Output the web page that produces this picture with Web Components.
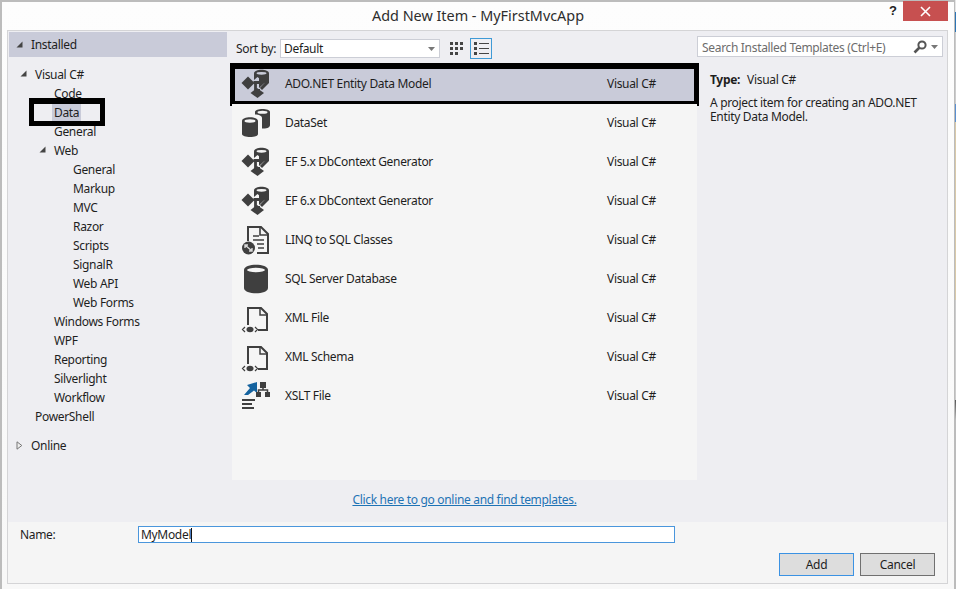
<!DOCTYPE html>
<html><head><meta charset="utf-8"><title>Add New Item</title>
<style>
html,body{margin:0;padding:0;background:#fafafa}
body{font:12px/16px "Noto Sans","Open Sans","Liberation Sans",sans-serif;color:#1e1e1e;letter-spacing:-.32px}
</style></head><body>
<vs-dialog heading="Add New Item - MyFirstMvcApp">
  <vs-tree slot="tree">
    <vs-tree-group label="Installed" open></vs-tree-group>
    <vs-tree-item level="1" arrow="open">Visual C#</vs-tree-item>
    <vs-tree-item level="2">Code</vs-tree-item>
    <vs-tree-item level="2" selected marked>Data</vs-tree-item>
    <vs-tree-item level="2">General</vs-tree-item>
    <vs-tree-item level="2" arrow="open">Web</vs-tree-item>
    <vs-tree-item level="3">General</vs-tree-item>
    <vs-tree-item level="3">Markup</vs-tree-item>
    <vs-tree-item level="3">MVC</vs-tree-item>
    <vs-tree-item level="3">Razor</vs-tree-item>
    <vs-tree-item level="3">Scripts</vs-tree-item>
    <vs-tree-item level="3">SignalR</vs-tree-item>
    <vs-tree-item level="3">Web API</vs-tree-item>
    <vs-tree-item level="3">Web Forms</vs-tree-item>
    <vs-tree-item level="2">Windows Forms</vs-tree-item>
    <vs-tree-item level="2">WPF</vs-tree-item>
    <vs-tree-item level="2">Reporting</vs-tree-item>
    <vs-tree-item level="2">Silverlight</vs-tree-item>
    <vs-tree-item level="2">Workflow</vs-tree-item>
    <vs-tree-item level="1">PowerShell</vs-tree-item>
    <vs-tree-group label="Online"></vs-tree-group>
  </vs-tree>
  <vs-toolbar slot="toolbar"></vs-toolbar>
  <vs-search slot="search"></vs-search>
  <vs-list slot="list">
    <vs-row icon="edm" lang="Visual C#" selected>ADO.NET Entity Data Model</vs-row>
    <vs-row icon="dataset" lang="Visual C#">DataSet</vs-row>
    <vs-row icon="edm" lang="Visual C#">EF 5.x DbContext Generator</vs-row>
    <vs-row icon="edm" lang="Visual C#">EF 6.x DbContext Generator</vs-row>
    <vs-row icon="linq" lang="Visual C#">LINQ to SQL Classes</vs-row>
    <vs-row icon="sql" lang="Visual C#">SQL Server Database</vs-row>
    <vs-row icon="xml" lang="Visual C#">XML File</vs-row>
    <vs-row icon="xml" lang="Visual C#">XML Schema</vs-row>
    <vs-row icon="xslt" lang="Visual C#">XSLT File</vs-row>
  </vs-list>
  <vs-details slot="details" type="Visual C#">A project item for creating an ADO.NET Entity Data Model.</vs-details>
  <vs-online slot="online">Click here to go online and find templates.</vs-online>
  <vs-footer slot="footer"></vs-footer>
</vs-dialog>
<script>
function def(name, html){
  customElements.define(name, class extends HTMLElement{
    connectedCallback(){
      if(this.shadowRoot) return;
      const r=this.attachShadow({mode:'open'});
      r.innerHTML = typeof html==='function'?html(this):html;
    }
  });
}
const esc=s=>String(s||'').replace(/&/g,'&amp;').replace(/</g,'&lt;');
const OPEN='<svg width="7" height="7" viewBox="0 0 7 7"><path d="M6.5 .5V6.5H.5Z" fill="#444"/></svg>';
const CLOSED='<svg width="7" height="9" viewBox="0 0 7 9"><path d="M1 .8 5.8 4.5 1 8.2Z" fill="#eee" stroke="#777"/></svg>';

def('vs-dialog',h=>`<style>
:host{display:flex;width:956px;height:589px;box-sizing:border-box;overflow:hidden;background:#fafafa}
.win{flex:1;display:flex;flex-direction:column;border:solid #bcbcbc;border-width:2px 1px 0 2px;min-width:0;background:linear-gradient(#fdfdfd,#f8f8f8)}
.edge{width:1px;background:linear-gradient(#e6e6e6 0,#e6e6e6 12px,#2c74b4 12px,#2c74b4 32px,#ccc 32px,#ccc 104px,#5a8fd0 104px,#5a8fd0 122px,#d9c9a8 122px,#d9c9a8 300px,#ccc 300px,#ccc 400px,#555 400px,#bbb 420px,#bbb 589px)}
header{height:28px;position:relative;display:flex;justify-content:center;align-items:center;font-size:14.4px;letter-spacing:0;color:#2d2d2d}
.help{position:absolute;right:57px;top:0;font:bold 13px/18px "Liberation Sans",sans-serif;color:#222}
.close{position:absolute;left:901px;top:-1px;width:45px;height:20px;background:#c75050;display:flex;align-items:center;justify-content:center}
.panel{flex:1;margin:0 6px 5px 5px;border:1px solid #d4d4d6;display:flex;flex-direction:column;min-height:0}
.body{height:491px;background:#eeeef2;display:grid;grid-template-columns:224px 465px 1fr;grid-template-rows:34px 415px 1fr}
.tree{grid-row:1/4;min-height:0}
.tb{grid-column:2}.srch{grid-column:3}.list{grid-column:2}.det{grid-column:3;grid-row:2/4}.on{grid-column:2}
.foot{flex:1;background:#f5f5f5}
</style>
<div class="win"><header><span class="t">${esc(h.getAttribute('heading'))}</span><span class="help">?</span>
<span class="close"><svg width="11" height="11" viewBox="0 0 11 11"><path d="M1 1 10 10M10 1 1 10" stroke="#fff" stroke-width="1.6"/></svg></span></header>
<div class="panel"><div class="body">
<div class="tree"><slot name="tree"></slot></div>
<div class="tb"><slot name="toolbar"></slot></div>
<div class="srch"><slot name="search"></slot></div>
<div class="list"><slot name="list"></slot></div>
<div class="det"><slot name="details"></slot></div>
<div class="on"><slot name="online"></slot></div>
</div><div class="foot"><slot name="footer"></slot></div></div></div><div class="edge"></div>`);

def('vs-tree',`<style>:host{display:block;padding:1px 0 0 1px}</style><slot></slot>`);

def('vs-tree-group',h=>{const open=h.hasAttribute('open');return `<style>
:host{display:flex;align-items:center;height:${open?25:19}px;width:218px;margin:${open?'0 0 8px':'10px 0 0'};${open?'background:#c9cbd9;':''}padding-left:7px;box-sizing:border-box;gap:8px}
.a{width:7px;display:flex;justify-content:center}
</style><span class="a">${open?OPEN:CLOSED}</span><span class="l">${esc(h.getAttribute('label'))}</span>`});

def('vs-tree-item',h=>{
 const lv=+h.getAttribute('level'),a=h.getAttribute('arrow'),sel=h.hasAttribute('selected'),mk=h.hasAttribute('marked');
 return `<style>
:host{display:flex;align-items:center;height:19px;padding-left:${lv*19+7}px;position:relative;box-sizing:border-box}
.a{width:7px;height:7px;position:absolute;left:${lv*19-8}px;top:5px;display:flex}
.x{padding:0 2px;margin-left:-2px;height:18px;line-height:18px;${sel?'background:#c9cbd9;':''}}
.mark{position:absolute;left:20px;top:-5px;width:66px;height:17px;border:solid #000;border-width:6px 5px 5px 5px}
</style>${a?`<span class="a">${OPEN}</span>`:''}<span class="x"><slot></slot></span>${mk?'<span class="mark"></span>':''}`});

def('vs-toolbar',`<style>
:host{display:flex;align-items:center;height:34px;padding:1px 0 0 4px;box-sizing:border-box}
.s{width:44px;flex:none}
.sel{width:160px;height:19px;box-sizing:border-box;background:#fff;border:1px solid #ccced6;display:flex;align-items:center;justify-content:space-between;padding:0 4px 0 3px}
.g{margin-left:10px;display:flex}
.b{margin-left:6px;width:22px;height:21px;box-sizing:border-box;border:1px solid #3f9ad6;display:flex;align-items:center;justify-content:center}
</style><span class="s">Sort by:</span><div class="sel"><span>Default</span><svg width="7" height="4" viewBox="0 0 7 4"><path d="M0 0H7L3.5 4Z" fill="#777"/></svg></div>
<span class="g"><svg width="14" height="14" viewBox="0 0 14 14" fill="#444"><path d="M0 0h3v3H0zM5 0h3v3H5zM10 0h3v3h-3zM0 5h3v3H0zM5 5h3v3H5zM10 5h3v3h-3zM0 10h3v3H0zM5 10h3v3H5z"/></svg></span>
<span class="b"><svg width="15" height="14" viewBox="0 0 15 14" fill="#444"><path d="M0 0h3v3H0zM0 5h3v3H0zM0 10h3v3H0zM5 1h10v1H5zM5 6h10v1H5zM5 11h10v1H5z"/></svg></span>`);

def('vs-search',`<style>
:host{display:block;padding:5px 4px 0 0}
.box{height:21px;box-sizing:border-box;background:#fff;border:1px solid #ccced6;display:flex;align-items:center;padding:2px 4px 0 4px;color:#6d6d6d}
.t{flex:1}
svg{margin-top:-2px}
</style><div class="box"><span class="t">Search Installed Templates (Ctrl+E)</span>
<svg width="14" height="14" viewBox="0 0 14 14"><circle cx="9" cy="5" r="3.6" fill="none" stroke="#555" stroke-width="2"/><path d="M6.5 7.5 1.5 12.5" stroke="#555" stroke-width="2.6"/></svg>
<svg style="margin-left:4px" width="7" height="4" viewBox="0 0 7 4"><path d="M0 0H7L3.5 4Z" fill="#777"/></svg></div>`);

def('vs-list',`<style>:host{display:block;height:415px;background:#f5f5f5;box-sizing:border-box}</style><slot></slot>`);

const D='#3f3f3f';
const ICONS={
edm:`<path d="M14 5.500c0-5 15-5 15 0V15L22 22 14 14Z" fill="${D}"/><ellipse cx="21.500" cy="5.300" rx="5" ry="1.400" fill="var(--bg)"/>
<path d="M10.500 15 17.500 9 24.500 15 17.500 22.500Z" fill="var(--bg)"/>
<path d="M1.500 15 8 8.500l6.500 6.500L8 21.500Z" fill="${D}"/>
<path d="M10.500 25 17 20l7 5-6.500 5Z" fill="${D}"/>
<path d="M13.500 14.500H20M15.500 13.500V22.500H20" fill="none" stroke="${D}" stroke-width="2.800"/><path d="M19 9 25 14.500 19 20Z" fill="${D}"/>`,
dataset:`<path d="M15 5c0-4 15-4 15 0v13c0 3-4 3.500-8 3.500V11c0-2-3-3.500-7-3.500Z" fill="${D}"/><ellipse cx="22.500" cy="5.300" rx="5" ry="1.500" fill="#f5f5f5"/>
<path d="M2 14c0-5 16-5 16 0v13c0 4-16 4-16 0Z" fill="${D}"/><ellipse cx="10" cy="14" rx="5.500" ry="1.700" fill="#f5f5f5"/>`,
linq:`<path d="M8 17V3H21l7 7V29H17" fill="none" stroke="${D}" stroke-width="2"/><path d="M20 3V11H28" fill="none" stroke="${D}" stroke-width="1.600"/>
<path d="M13 12h6M13 16h11M17 20h7M18 24h6" stroke="${D}" stroke-width="1.600"/>
<circle cx="8.500" cy="24" r="6.500" fill="${D}"/><path d="M5 21l7 6M5 24v-3h3M12 24v3H9" fill="none" stroke="#d8d8d8" stroke-width="1.400"/>`,
sql:`<path d="M4 7c0-7 24-7 24 0v18c0 7-24 7-24 0Z" fill="${D}"/><ellipse cx="16" cy="7" rx="9" ry="2.200" fill="#f5f5f5"/>`,
xml:`<path d="M8 23V6H21l6 6V28H18" fill="none" stroke="${D}" stroke-width="2"/><path d="M20 6V13H27" fill="none" stroke="${D}" stroke-width="1.500"/>
<path d="M5 25 2.500 27.500 5 30M15 25l2.500 2.500L15 30" fill="none" stroke="${D}" stroke-width="1.200"/><ellipse cx="10" cy="27.500" rx="3.500" ry="2.800" fill="${D}"/>`,
xslt:`<path d="M4 15 10 8 7 5 17 2V13L14 10.500 8 15Z" fill="#15639f"/><path d="M20 2h6v6h-6zM16 12h5v5h-5zM25 12h5v5h-5z" fill="${D}"/><path d="M23 8v2M18.500 12v-2H27.500v2" fill="none" stroke="${D}" stroke-width="1.500"/>
<path d="M2 20h13M2 24h10M2 28h12" stroke="${D}" stroke-width="1.800"/>`};

def('vs-row',h=>{const s=h.hasAttribute('selected');return `<style>
:host{--bg:${s?'#c9cbd9':'#f5f5f5'};display:grid;grid-template-columns:53px 322px 1fr;align-items:center;height:39px;position:relative;box-sizing:border-box;background:var(--bg)}
svg{display:block;margin-left:8px}
.mark{position:absolute;left:-2px;top:-2px;right:-2px;bottom:-2px;border:solid #000;border-width:6px 5px 5px 5px;pointer-events:none}
span{padding-bottom:2px}
</style><svg width="34" height="34" viewBox="0 0 34 34">${ICONS[h.getAttribute('icon')]}</svg><span><slot></slot></span><span>${esc(h.getAttribute('lang'))}</span>${s?'<i class="mark"></i>':''}`});

def('vs-details',h=>`<style>:host{display:block;padding:7px 14px 0 13px}
.t{margin-bottom:8px;height:16px}b{font-weight:700;margin-right:7px}p{margin:0;line-height:14px}</style>
<div class="t"><b>Type:</b>${esc(h.getAttribute('type'))}</div><p><slot></slot></p>`);

def('vs-online',`<style>:host{display:flex;justify-content:center;padding-top:12px;color:#1e73b5;text-decoration:underline}</style><slot></slot>`);

def('vs-button',h=>`<style>:host{display:block;width:75px;height:23px}
div{height:100%;box-sizing:border-box;display:flex;align-items:center;justify-content:center;background:#dddddd;border:1px solid ${h.getAttribute('accent')||'#707070'}}</style><div><slot></slot></div>`);

def('vs-footer',`<style>
:host{display:block;padding:4px 12px 0 12px}
.r{display:flex;align-items:center;height:17px}
.l{width:118px}
.i{width:537px;height:17px;box-sizing:border-box;background:#fff;border:1px solid #4a96dc;display:flex;align-items:center;padding-left:2px}
.c{width:1px;height:14px;background:#111}
.btns{display:flex;justify-content:flex-end;gap:6px;margin-top:10px}
</style><div class="r"><span class="l">Name:</span><div class="i"><span>MyModel</span><span class="c"></span></div></div>
<div class="btns"><vs-button accent="#3b92e3">Add</vs-button><vs-button>Cancel</vs-button></div>`);
</script>
</body></html>
